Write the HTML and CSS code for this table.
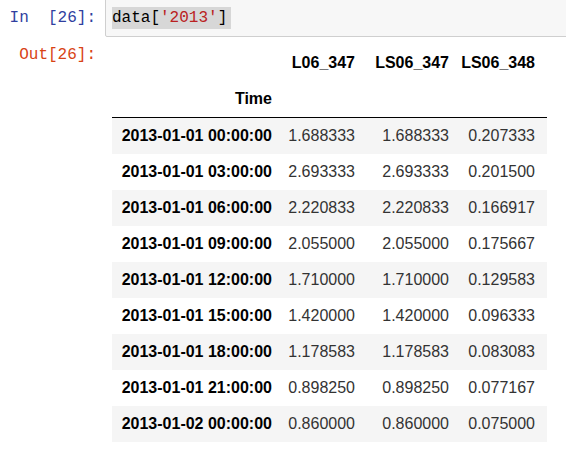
FILE: index.html
```html
<!DOCTYPE html>
<html>
<head>
<meta charset="utf-8">
<link rel="stylesheet" href="styles.css">
</head>
<body>
<div class="cell">
  <div class="row in-row">
    <div class="prompt in-prompt">In&nbsp;&nbsp;[26]:</div>
    <div class="input-area"><span class="code"><span class="hl">data[<span class="str">'2013'</span>]</span></span></div>
  </div>
  <div class="row out-row">
    <div class="prompt out-prompt">Out[26]:</div>
    <div class="output">
      <table class="df">
        <thead>
          <tr><th class="c-idx"></th><th class="c-1">L06_347</th><th class="c-2">LS06_347</th><th class="c-3">LS06_348</th></tr>
          <tr class="names"><th>Time</th><th></th><th></th><th></th></tr>
        </thead>
        <tbody>
          <tr><th>2013-01-01 00:00:00</th><td>1.688333</td><td>1.688333</td><td>0.207333</td></tr>
          <tr><th>2013-01-01 03:00:00</th><td>2.693333</td><td>2.693333</td><td>0.201500</td></tr>
          <tr><th>2013-01-01 06:00:00</th><td>2.220833</td><td>2.220833</td><td>0.166917</td></tr>
          <tr><th>2013-01-01 09:00:00</th><td>2.055000</td><td>2.055000</td><td>0.175667</td></tr>
          <tr><th>2013-01-01 12:00:00</th><td>1.710000</td><td>1.710000</td><td>0.129583</td></tr>
          <tr><th>2013-01-01 15:00:00</th><td>1.420000</td><td>1.420000</td><td>0.096333</td></tr>
          <tr><th>2013-01-01 18:00:00</th><td>1.178583</td><td>1.178583</td><td>0.083083</td></tr>
          <tr><th>2013-01-01 21:00:00</th><td>0.898250</td><td>0.898250</td><td>0.077167</td></tr>
          <tr><th>2013-01-02 00:00:00</th><td>0.860000</td><td>0.860000</td><td>0.075000</td></tr>
        </tbody>
      </table>
    </div>
  </div>
</div>
</body>
</html>
```
FILE: styles.css
```css
html, body {
  margin: 0;
  padding: 0;
  background: #ffffff;
  overflow: hidden;
}
.cell {
  display: flex;
  flex-direction: column;
}
.row {
  display: flex;
  align-items: flex-start;
}
.prompt {
  flex: 0 0 105px;
  box-sizing: border-box;
  text-align: right;
  padding-right: 9px;
  font-family: "Liberation Mono", "DejaVu Sans Mono", monospace;
  font-size: 16px;
  line-height: 20px;
  white-space: nowrap;
}
.in-prompt {
  color: #303f9f;
  padding-top: 8px;
}
.out-prompt {
  color: #d84315;
  padding-top: 0;
}
.input-area {
  flex: 1 1 auto;
  margin-top: -6px;
  margin-right: -6px;
  height: 43px;
  box-sizing: border-box;
  border: 1px solid #cfcfcf;
  border-radius: 2px;
  background: #f7f7f7;
  padding: 12px 0 0 6px;
}
.code {
  font-family: "Liberation Mono", "DejaVu Sans Mono", monospace;
  font-size: 16px;
  color: #000;
}
.hl {
  display: inline-block;
  background: #d7d7d7;
  line-height: 22px;
  height: 22px;
  padding-right: 4px;
}
.str {
  color: #ba2121;
}
.out-row {
  margin-top: 8px;
}
.output {
  flex: 1 1 auto;
  padding-left: 7px;
}
.df {
  border-collapse: collapse;
  border-spacing: 0;
  font-family: "Liberation Sans", Arial, sans-serif;
  font-size: 16px;
  color: #000;
}
.df th, .df td {
  text-align: right;
  vertical-align: middle;
  padding: 8px 8px;
  line-height: 20px;
  height: 20px;
  white-space: nowrap;
}
.df th.c-idx { width: 152px; }
.df th.c-1 { width: 67px; }
.df th.c-2 { width: 78px; }
.df th.c-3 { width: 74px; }
.df tr > :last-child { padding-left: 4px; padding-right: 12px; }
.df th {
  font-weight: bold;
}
.df td {
  color: #333333;
}
.df thead tr.names {
  border-bottom: 1px solid #000;
}
.df tbody tr:nth-child(odd) {
  background: #f5f5f5;
}
.df tbody tr:nth-child(even) {
  background: #ffffff;
}
```
